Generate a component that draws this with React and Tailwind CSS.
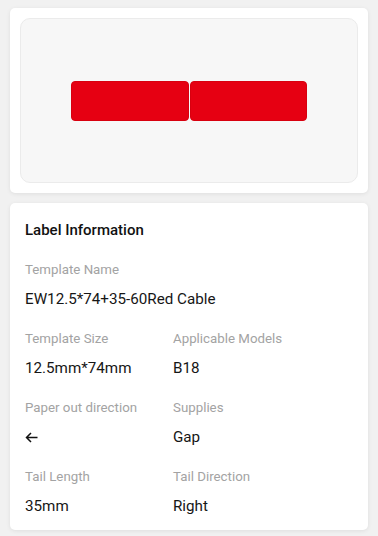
import React from "react";

const rows = [
  [{ label: "Template Size", value: "12.5mm*74mm" }, { label: "Applicable Models", value: "B18" }],
  [{ label: "Paper out direction", value: "arrow" }, { label: "Supplies", value: "Gap" }],
  [{ label: "Tail Length", value: "35mm" }, { label: "Tail Direction", value: "Right" }],
];

const ArrowLeft = () => (
  <svg width="13" height="11" viewBox="0 0 13 11" fill="none" stroke="#111" strokeWidth="1.5">
    <path d="M12.5 5.5H1.5M6 1L1.5 5.5L6 10" />
  </svg>
);

const Field = ({ label, value }) => (
  <div className="flex flex-col">
    <div className="text-[13.3px] leading-[18px] text-[#a3a3a3]">{label}</div>
    <div className="mt-[10px] h-5 flex items-center text-[15.2px] leading-5 text-[#161616]">
      {value === "arrow" ? <ArrowLeft /> : value}
    </div>
  </div>
);

export default function App() {
  return (
    <div
      className="min-h-[536px] bg-[#f1f1f1] px-[10px] pt-2 pb-2 flex flex-col gap-[10px]"
      style={{ fontFamily: "Roboto, 'Noto Sans', sans-serif" }}
    >
      {/* Preview */}
      <div className="bg-white rounded-[5px] p-[10px] shadow-[0_1px_4px_rgba(0,0,0,0.08)]">
        <div className="h-[165px] bg-[#f7f7f7] border border-[#ebebeb] rounded-[10px] flex items-center justify-center">
          <div className="flex gap-px">
            <div className="w-[118px] h-10 bg-[#e60012] rounded-[4px] border border-[#d8000f]" />
            <div className="w-[117px] h-10 bg-[#e60012] rounded-[4px] border border-[#d8000f]" />
          </div>
        </div>
      </div>

      {/* Info */}
      <div className="bg-white rounded-[5px] px-[15px] pt-[17px] pb-[14px] shadow-[0_1px_4px_rgba(0,0,0,0.08)]">
        <div className="text-[15px] leading-5 font-medium text-[#111]">Label Information</div>
        <div className="mt-[21px] flex flex-col gap-[21px]">
          <Field label="Template Name" value="EW12.5*74+35-60Red Cable" />
          {rows.map((r, i) => (
            <div key={i} className="grid grid-cols-[148px_1fr]">
              <Field {...r[0]} />
              <Field {...r[1]} />
            </div>
          ))}
        </div>
      </div>
    </div>
  );
}
